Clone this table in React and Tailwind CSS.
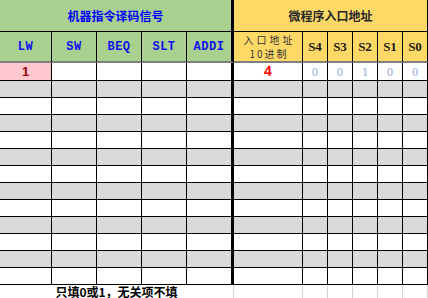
import React from "react";

const cjk = "font-['Noto_Sans_CJK_SC',sans-serif]";
const cols = "grid grid-cols-[52px_45px_45px_45px_47px_69px_25px_25px_25px_25px_25px]";

const decode = ["LW", "SW", "BEQ", "SLT", "ADDI"];
const bits = ["S4", "S3", "S2", "S1", "S0"];

function Row({ index }) {
  const gray = index % 2 === 1;
  const bg = gray ? "bg-[#d9d9d9]" : "bg-white";
  const h = index === 0 ? "h-[18px]" : "h-[17px]";
  const first = index === 0;
  return (
    <>
      <div className={`${h} ${first ? "bg-[#ffc7ce]" : bg} border-r border-b border-black flex items-center justify-center font-['Liberation_Sans',sans-serif] font-bold text-[13px] text-[#9c0006]`}>
        {first ? "1" : ""}
      </div>
      <div className={`${h} ${bg} border-r border-b border-black`} />
      <div className={`${h} ${bg} border-r border-b border-black`} />
      <div className={`${h} ${bg} border-r border-b border-black`} />
      <div className={`${h} ${bg} border-r-[3px] border-b border-black`} />
      <div className={`${h} ${bg} border-r border-b border-black flex items-center justify-center font-['Liberation_Sans',sans-serif] font-bold text-[14px] text-[#ff0000]`}>
        {first ? "4" : ""}
      </div>
      {[0, 0, 1, 0, 0].map((b, i) => (
        <div key={i} className={`${h} ${bg} border-r border-b border-black flex items-center justify-center font-['Liberation_Serif',serif] text-[12px] text-[#8ea9db]`}>
          {first ? b : ""}
        </div>
      ))}
    </>
  );
}

export default function App() {
  return (
    <div className="w-[428px] h-[298px] bg-white overflow-hidden">
      <div className={cols}>
        {/* title row */}
        <div className={`col-span-5 h-[32px] bg-[#a9d08e] border-r-[3px] border-b border-black flex items-center justify-center ${cjk} font-bold text-[12px] text-[#0000ff]`}>
          机器指令译码信号
        </div>
        <div className={`col-span-6 h-[32px] bg-[#ffd966] border-r border-b border-black flex items-center justify-center ${cjk} font-bold text-[12px] text-[#262626]`}>
          微程序入口地址
        </div>

        {/* header row */}
        {decode.map((d, i) => (
          <div key={d} className={`h-[31px] bg-[#a9d08e] ${i === 4 ? "border-r-[3px] border-r-black" : "border-r border-r-black"} border-b-2 border-b-[#7f7f7f] flex items-center justify-center font-['Liberation_Mono',monospace] font-bold text-[12px] tracking-[0.5px] text-[#1010f0]`}>
            {d}
          </div>
        ))}
        <div className={`h-[31px] bg-[#ffd966] border-r border-r-black border-b-2 border-b-[#7f7f7f] flex flex-col items-center justify-center ${cjk} text-[10px] leading-[14px] text-[#333333]`}>
          <span className="tracking-[3px] pl-[3px]">入口地址</span>
          <span className="tracking-[2px] pl-[2px]">10进制</span>
        </div>
        {bits.map((b) => (
          <div key={b} className="h-[31px] bg-[#ffd966] border-r border-r-black border-b-2 border-b-[#7f7f7f] flex items-center justify-center font-['Liberation_Serif',serif] font-bold text-[13px] text-[#1a1a1a]">
            {b}
          </div>
        ))}

        {/* data rows */}
        {Array.from({ length: 13 }).map((_, i) => (
          <Row key={i} index={i} />
        ))}

        {/* footer note */}
        <div className={`col-span-5 h-[13px] border-r border-[#d4d4d4] flex items-center justify-center ${cjk} font-bold text-[12px] leading-[13px] text-black`}>
          只填0或1，无关项不填
        </div>
        <div className="h-[13px] border-r border-[#d4d4d4]" />
        <div className="h-[13px] border-r border-[#d4d4d4]" />
        <div className="h-[13px] border-r border-[#d4d4d4]" />
        <div className="h-[13px] border-r border-[#d4d4d4]" />
        <div className="h-[13px] border-r border-[#d4d4d4]" />
        <div className="h-[13px] border-r border-[#d4d4d4]" />
      </div>
    </div>
  );
}
